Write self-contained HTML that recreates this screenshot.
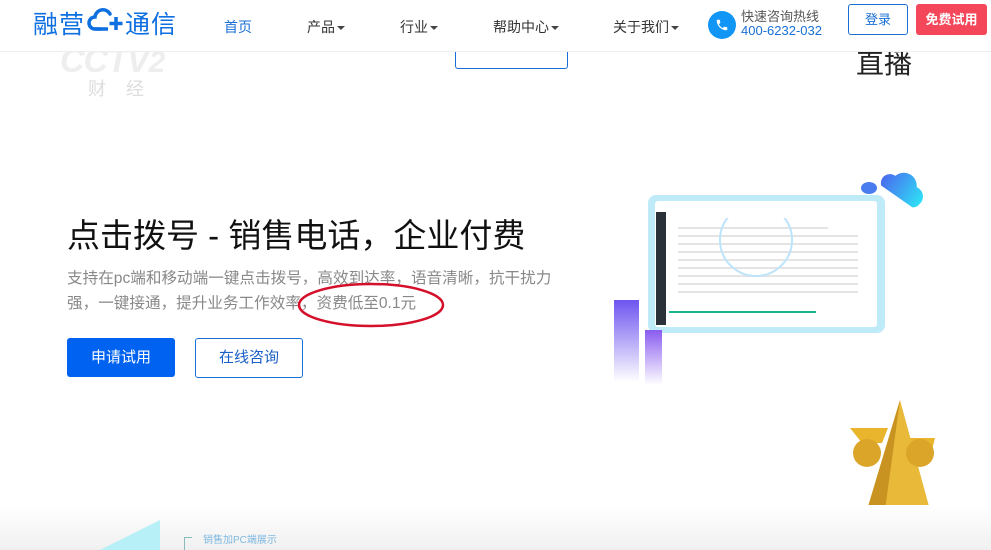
<!DOCTYPE html>
<html><head><meta charset="utf-8"><style>
*{margin:0;padding:0;box-sizing:border-box}
body{width:991px;height:550px;overflow:hidden;background:#fff;font-family:"Liberation Sans","Noto Sans CJK SC",sans-serif;position:relative}
.a{position:absolute;white-space:nowrap}
.hdr{position:absolute;left:0;top:0;width:991px;height:52px;background:#fff;border-bottom:1px solid #eee;z-index:2}
.nav{font-size:14px;color:#333;top:17px}
.nav i{display:inline-block;border:4px solid transparent;border-top:4px solid #444;border-bottom:0;margin-left:2px;vertical-align:middle}
</style></head><body>
<div class="a" style="left:60px;top:42px;font-size:34px;font-weight:bold;color:#eee;letter-spacing:-1px;font-style:italic">CCTV<span style="font-size:30px">2</span></div>
<div class="a" style="left:88px;top:75px;font-size:18px;color:#ddd;letter-spacing:20px">财经</div>
<div class="a" style="left:856px;top:42px;font-size:28px;color:#222">直播</div>
<div class="a" style="left:455px;top:40px;width:113px;height:29px;border:1px solid #1a6fd6;border-top:0;border-radius:0 0 3px 3px"></div>
<div class="hdr">
<div class="a" style="left:33px;top:5px;font-size:25px;color:#0d6fe0;letter-spacing:1px">融营<span style="display:inline-block;width:40px"></span>通信</div>
<svg class="a" style="left:87px;top:8px" width="40" height="26" viewBox="0 0 40 26"><path d="M14 21H8a6 6 0 0 1 0-12 8 8 0 0 1 15-3" fill="none" stroke="#0d6fe0" stroke-width="3.5" stroke-linecap="round"/><path d="M8 21h13" stroke="#0d6fe0" stroke-width="3.5"/><path d="M29 9v13M22.5 15.5h13" stroke="#0d6fe0" stroke-width="3.5"/></svg>
<div class="a nav" style="left:224px;color:#1a6fd6">首页</div>
<div class="a nav" style="left:307px">产品<i></i></div>
<div class="a nav" style="left:400px">行业<i></i></div>
<div class="a nav" style="left:493px">帮助中心<i></i></div>
<div class="a nav" style="left:613px">关于我们<i></i></div>
<div class="a" style="left:708px;top:11px;width:28px;height:28px;border-radius:50%;background:#1296f5"></div>
<svg class="a" style="left:715px;top:18px" width="14" height="14" viewBox="0 0 24 24"><path d="M6.6 10.8a15 15 0 0 0 6.6 6.6l2.2-2.2a1 1 0 0 1 1-.25 11 11 0 0 0 3.6.6 1 1 0 0 1 1 1V20a1 1 0 0 1-1 1A17 17 0 0 1 3 4a1 1 0 0 1 1-1h3.5a1 1 0 0 1 1 1 11 11 0 0 0 .6 3.6 1 1 0 0 1-.25 1z" fill="#fff"/></svg>
<div class="a" style="left:741px;top:6px;font-size:13px;color:#555">快速咨询热线</div>
<div class="a" style="left:741px;top:23px;font-size:13px;color:#1a6fd6">400-6232-032</div>
<div class="a" style="left:848px;top:4px;width:60px;height:31px;border:1px solid #1a6fd6;border-radius:3px;font-size:13px;color:#1a6fd6;text-align:center;line-height:29px">登录</div>
<div class="a" style="left:916px;top:4px;width:71px;height:31px;background:#f5475a;border-radius:3px;font-size:13px;color:#fff;text-align:center;line-height:31px;font-weight:bold">免费试用</div>
</div>
<div class="a" style="left:67px;top:209px;font-size:33px;color:#111">点击拨号 - 销售电话，企业付费</div>
<div class="a" style="left:67px;top:266px;font-size:15.6px;color:#888;line-height:25px">支持在pc端和移动端一键点击拨号，高效到达率，语音清晰，抗干扰力<br>强，一键接通，提升业务工作效率，资费低至0.1元</div>
<svg class="a" style="left:295px;top:280px" width="155" height="50"><ellipse cx="76" cy="25" rx="72" ry="21" fill="none" stroke="#d4102a" stroke-width="2.5"/></svg>
<div class="a" style="left:67px;top:338px;width:108px;height:39px;background:#0062f0;border-radius:3px;color:#fff;font-size:15px;text-align:center;line-height:39px">申请试用</div>
<div class="a" style="left:195px;top:338px;width:108px;height:40px;border:1px solid #1a6fd6;border-radius:3px;color:#1a5fc6;font-size:15px;text-align:center;line-height:38px">在线咨询</div>
<div class="a" style="left:648px;top:195px;width:237px;height:138px;background:#bfeaf8;border-radius:8px"></div>
<div class="a" style="left:655px;top:201px;width:222px;height:126px;background:#fff;border-radius:3px"></div>
<div class="a" style="left:656px;top:212px;width:10px;height:113px;background:#2a3138"></div>
<div class="a" style="left:669px;top:311px;width:147px;height:2px;background:#17b58a"></div>
<svg class="a" style="left:668px;top:218px" width="205" height="90"><g stroke="#e4e4e4" stroke-width="2"><path d="M10 10h150M10 18h180M10 26h180M10 34h180M10 42h180M10 50h180M10 58h180M10 66h180M10 74h180"/></g><circle cx="88" cy="22" r="36" fill="none" stroke="#bde4fb" stroke-width="2"/></svg>
<svg class="a" style="left:855px;top:162px" width="85" height="55"><defs><linearGradient id="g" x1="0" x2="1"><stop offset="0" stop-color="#4a6cf0"/><stop offset="1" stop-color="#2ee0f5"/></linearGradient></defs><g transform="rotate(35 50 28)"><path d="M28 38a9 9 0 0 1 6-16 13 13 0 0 1 24-3 10 10 0 0 1 12 12 8 8 0 0 1-4 7z" fill="url(#g)"/></g><ellipse cx="14" cy="26" rx="8" ry="6" fill="#4a7cf0"/></svg>
<div class="a" style="left:614px;top:300px;width:25px;height:82px;background:linear-gradient(#6e55f0,#fff)"></div>
<div class="a" style="left:645px;top:330px;width:17px;height:55px;background:linear-gradient(#8a5cf0,#fff)"></div>
<svg class="a" style="left:845px;top:398px" width="95" height="115"><path d="M5 30h38l-6 15h-20zM45 40h45l-3 12H45z" fill="#e8b52c"/><path d="M55 2L85 112H22z" fill="#e9b93a"/><path d="M55 2L40 112H22z" fill="#c89320"/><circle cx="75" cy="55" r="14" fill="#dba52a"/><circle cx="22" cy="55" r="14" fill="#dba52a"/></svg>
<div class="a" style="left:0;top:505px;width:991px;height:45px;background:linear-gradient(#fff,#f0f0f0)"></div>
<svg class="a" style="left:100px;top:520px" width="70" height="30"><path d="M60 0v30H0z" fill="#b8f0f8"/></svg>
<div class="a" style="left:184px;top:537px;width:8px;height:13px;border-left:1px solid #8bb;border-top:1px solid #8bb"></div>
<div class="a" style="left:203px;top:531px;font-size:10px;color:#7fb8e0">销售加PC端展示</div>
</body></html>
